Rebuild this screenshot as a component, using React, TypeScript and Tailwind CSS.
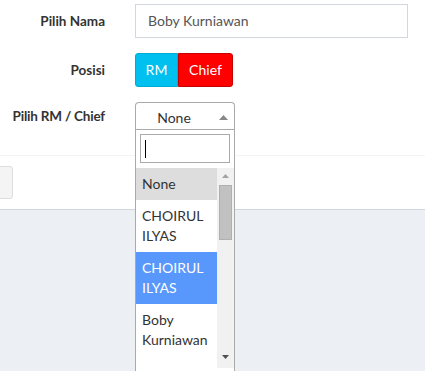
import React from "react";

const font = { fontFamily: "Lato, 'Open Sans', sans-serif" };

export default function App() {
  return (
    <div
      className="relative w-[425px] h-[371px] overflow-hidden bg-[#ecf0f5] text-[14px] leading-[20px] text-[#333]"
      style={font}
    >
      {/* white box */}
      <div className="bg-white border-b border-[#d2d6de]">
        <div className="pt-[4px] pb-[25px] flex flex-col gap-[15px]">
          <div className="flex items-center">
            <label className="w-[105px] text-right font-bold text-[13.5px]">Pilih Nama</label>
            <div className="ml-[30px] w-[273px] h-[34px] border border-[#d2d6de] flex items-center px-[12px] text-[#555]">
              Boby Kurniawan
            </div>
          </div>
          <div className="flex items-center">
            <label className="w-[105px] text-right font-bold text-[13.5px]">Posisi</label>
            <div className="ml-[30px] flex h-[34px]">
              <button className="w-[43px] bg-[#00c0ef] border border-[#00acd6] rounded-l-[3px] text-white">
                RM
              </button>
              <button className="w-[55px] bg-[#ff0000] border border-[#c90000] rounded-r-[3px] text-white">
                Chief
              </button>
            </div>
          </div>
          <div className="flex items-center">
            <label className="w-[105px] text-right font-bold text-[13.5px] tracking-[-0.2px]">Pilih RM / Chief</label>
            <div className="ml-[30px] w-[100px] h-[28px] border border-[#aaa] border-b-0 rounded-t-[4px] flex items-center relative">
              <span className="flex-1 text-center pr-[24px] pl-[2px] pt-[3px]">None</span>
              <svg className="absolute right-[6px] top-[12px]" width="9" height="5" viewBox="0 0 9 5">
                <path d="M0 5 L4.5 0 L9 5 Z" fill="#888" />
              </svg>
            </div>
          </div>
        </div>
        <div className="border-t border-[#f4f4f4] py-[10px]">
          <div className="ml-[-40px] w-[53px] h-[33px] bg-[#f4f4f4] border border-[#ddd] rounded-[3px]" />
        </div>
      </div>

      {/* dropdown */}
      <div className="absolute left-[135px] top-[129px] w-[100px] h-[245px] bg-white border border-[#aaa] flex flex-col">
        <div className="px-[4px] pt-[4px] pb-[5px]">
          <div className="h-[29px] border border-[#aaa] flex items-center pl-[4px]">
            <div className="w-px h-[18px] bg-black" />
          </div>
        </div>
        <div className="flex h-[200px]">
          <ul className="w-[81px] flex flex-col">
            <li className="px-[6px] py-[6px] bg-[#ddd]">None</li>
            <li className="px-[6px] py-[6px]">CHOIRUL ILYAS</li>
            <li className="px-[6px] py-[6px] bg-[#5897fb] text-white">CHOIRUL ILYAS</li>
            <li className="px-[6px] py-[6px]">Boby Kurniawan</li>
          </ul>
          <div className="w-[17px] bg-[#f1f1f1] flex flex-col items-center">
            <svg className="mt-[6px]" width="7" height="4" viewBox="0 0 7 4">
              <path d="M0 4 L3.5 0 L7 4 Z" fill="#a3a3a3" />
            </svg>
            <div className="mt-[7px] w-[13px] h-[55px] bg-[#c1c1c1] border border-[#b0b0b0]" />
            <div className="flex-1" />
            <svg className="mb-[9px]" width="7" height="4" viewBox="0 0 7 4">
              <path d="M0 0 L3.5 4 L7 0 Z" fill="#505050" />
            </svg>
          </div>
        </div>
      </div>
    </div>
  );
}
